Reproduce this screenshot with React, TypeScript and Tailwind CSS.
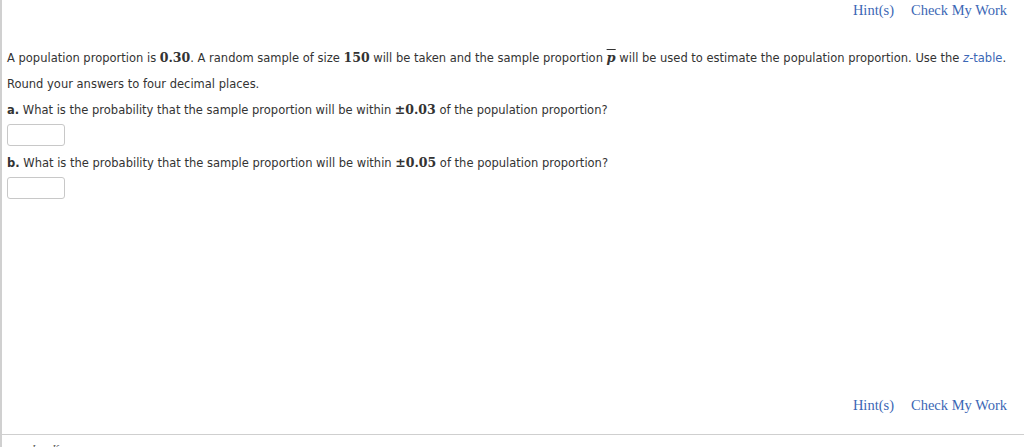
import React from "react";

const M = ({ children }: { children: React.ReactNode }) => (
  <span className="text-[12.5px] font-bold leading-none" style={{ fontFamily: '"DejaVu Serif", "Liberation Serif", serif' }}>
    {children}
  </span>
);

function Links() {
  return (
    <div className="flex justify-end gap-[17px] pr-[17px] text-[14.5px] text-[#3b67b5]" style={{ fontFamily: '"Liberation Serif", serif' }}>
      <span>Hint(s)</span>
      <span>Check My Work</span>
    </div>
  );
}

export default function App() {
  return (
    <div className="w-[1024px] h-[447px] overflow-hidden bg-white border-l-2 border-[#d0d0d0] text-[#333] relative" style={{ fontFamily: '"DejaVu Sans", Verdana, sans-serif' }}>
      <div className="pt-[0px] h-[24px]">
        <Links />
      </div>
      <div className="pl-[5px] text-[11.5px]">
        <div className="mt-[26px] leading-[16px]">
          A population proportion is <M>0.30</M>. A random sample of size <M>150</M> will be taken and the sample proportion{" "}
          <span className="italic font-bold text-[13px] leading-none overline" style={{ fontFamily: '"DejaVu Serif", serif' }}>p</span> will be used to estimate the population proportion. Use the{" "}
          <span className="text-[#3b67b5]"><i>z</i>-table</span>.
        </div>
        <div className="mt-[10px] leading-[16px]">Round your answers to four decimal places.</div>
        <div className="mt-[10px] leading-[16px]">
          <b>a.</b> What is the probability that the sample proportion will be within <M>±0.03</M> of the population proportion?
        </div>
        <div className="mt-[6px] w-[58px] h-[22px] border border-[#c8c8c8] rounded-[3px]" />
        <div className="mt-[9px] leading-[16px]">
          <b>b.</b> What is the probability that the sample proportion will be within <M>±0.05</M> of the population proportion?
        </div>
        <div className="mt-[6px] w-[58px] h-[22px] border border-[#c8c8c8] rounded-[3px]" />
      </div>
      <div className="absolute left-0 right-0 top-[395px]">
        <Links />
      </div>
      <div className="absolute left-0 right-0 top-[434px] border-t border-[#cfcfcf] pt-[6px] pl-[4px] flex items-center gap-1 text-[10px] text-[#555]">
        <span className="inline-block w-[22px] h-[4px] bg-[#555] rounded-full" />
        <span className="italic" style={{ fontFamily: '"Liberation Serif", serif' }}>Icon Key</span>
      </div>
    </div>
  );
}
